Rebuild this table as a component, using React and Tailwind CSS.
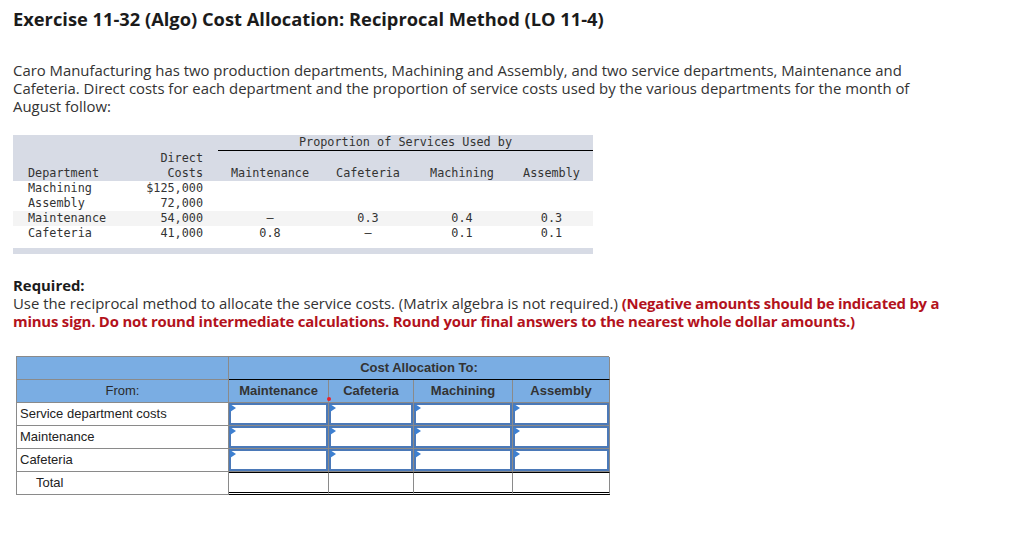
import React from "react";

const mono = { fontFamily: '"DejaVu Sans Mono", "Liberation Mono", monospace' };

function Tri() {
  return (
    <svg className="absolute left-[1px] top-[1px]" width="6" height="8" viewBox="0 0 6 8">
      <polygon points="0,0 6,4 0,8" fill="#3d7fd0" />
    </svg>
  );
}

function InputCell() {
  return (
    <div className="relative border-r border-b border-[#8a8a8a] h-[23px]">
      <div className="absolute inset-[0px] border-2 border-[#4b79b8] bg-white" />
      <Tri />
    </div>
  );
}

export default function App() {
  const topRows = [
    { d: "Machining", c: "$125,000", m: "", ca: "", ma: "", as: "", bg: "" },
    { d: "Assembly", c: "72,000", m: "", ca: "", ma: "", as: "", bg: "" },
    { d: "Maintenance", c: "54,000", m: "—", ca: "0.3", ma: "0.4", as: "0.3", bg: "bg-[#f4f4f4]" },
    { d: "Cafeteria", c: "41,000", m: "0.8", ca: "—", ma: "0.1", as: "0.1", bg: "" },
  ];
  const cols = "grid grid-cols-[127px_78px_104px_92px_96px_83px]";
  return (
    <div className="w-[1026px] h-[546px] bg-white px-[13px] pt-[7px] text-[#222]" style={{ fontFamily: '"Open Sans", Lato, sans-serif' }}>
      <div className="text-[18.3px] font-bold leading-[24px] text-[#1b1b1b]">
        Exercise 11-32 (Algo) Cost Allocation: Reciprocal Method (LO 11-4)
      </div>
      <div className="mt-[30px] text-[14.9px] leading-[18px] text-[#333]">
        Caro Manufacturing has two production departments, Machining and Assembly, and two service departments, Maintenance and
        <br />
        Cafeteria. Direct costs for each department and the proportion of service costs used by the various departments for the month of
        <br />
        August follow:
      </div>

      <div className="mt-[20px] w-[580px] text-[11.8px] leading-[15px] text-[#333]" style={mono}>
        <div className="bg-[#d7dbe5]">
          <div className={cols + " h-[15px]"}>
            <div />
            <div />
            <div className="col-span-4 text-center border-b border-black">Proportion of Services Used by</div>
          </div>
          <div className={cols + " h-[15px] mt-[1px]"}>
            <div />
            <div className="text-right pr-[15px]">Direct</div>
          </div>
          <div className={cols + " h-[15px]"}>
            <div className="pl-[15px]">Department</div>
            <div className="text-right pr-[15px]">Costs</div>
            <div className="text-center">Maintenance</div>
            <div className="text-center">Cafeteria</div>
            <div className="text-center">Machining</div>
            <div className="text-center">Assembly</div>
          </div>
        </div>
        {topRows.map((r) => (
          <div key={r.d} className={cols + " h-[15px] " + r.bg}>
            <div className="pl-[15px]">{r.d}</div>
            <div className="text-right pr-[15px]">{r.c}</div>
            <div className="text-center">{r.m}</div>
            <div className="text-center">{r.ca}</div>
            <div className="text-center">{r.ma}</div>
            <div className="text-center">{r.as}</div>
          </div>
        ))}
        <div className="h-[7px]" />
        <div className="h-[6px] bg-[#d7dbe5]" />
      </div>

      <div className="mt-[22px] text-[14.9px] leading-[18px] text-[#333]">
        <div className="font-bold text-[#1b1b1b]">Required:</div>
        <div>
          Use the reciprocal method to allocate the service costs. (Matrix algebra is not required.){" "}
          <span className="font-bold text-[#b3121c] tracking-[-0.2px]">(Negative amounts should be indicated by a</span>
          <br />
          <span className="font-bold text-[#b3121c] tracking-[-0.2px]">
            minus sign. Do not round intermediate calculations. Round your final answers to the nearest whole dollar amounts.)
          </span>
        </div>
      </div>

      <div
        className="relative mt-[26px] ml-[3px] w-[593px] grid grid-cols-[212px_100px_85px_99px_97px] border-l border-t border-[#8a8a8a] text-[13px] text-[#222]"
        style={{ fontFamily: '"Liberation Sans", Arial, sans-serif' }}
      >
        <div className="h-[23px] bg-[#7aade3] border-r border-b border-[#8a8a8a]" />
        <div className="col-span-4 h-[23px] bg-[#7aade3] border-r border-[#8a8a8a] border-b border-b-black flex items-center justify-center font-bold text-[#333]">
          Cost Allocation To:
        </div>
        <div className="h-[23px] bg-[#7aade3] border-r border-b border-[#8a8a8a] flex items-center justify-center text-[#2a2a2a]">From:</div>
        {["Maintenance", "Cafeteria", "Machining", "Assembly"].map((h) => (
          <div key={h} className="h-[23px] bg-[#7aade3] border-r border-b border-[#8a8a8a] flex items-center justify-center font-bold text-[#333]">
            {h}
          </div>
        ))}
        {["Service department costs", "Maintenance", "Cafeteria"].map((l) => (
          <React.Fragment key={l}>
            <div className="h-[23px] border-r border-b border-[#8a8a8a] flex items-center pl-[3px]">{l}</div>
            <InputCell />
            <InputCell />
            <InputCell />
            <InputCell />
          </React.Fragment>
        ))}
        <div className="h-[23px] border-r border-b border-[#8a8a8a] flex items-center pl-[19px]">Total</div>
        {[0, 1, 2, 3].map((i) => (
          <div key={i} className="h-[23px] border-r border-[#8a8a8a] border-t border-t-black border-b-[3px] border-b-black border-double" />
        ))}
        <div className="absolute left-[310px] top-[40px] w-[4px] h-[4px] rounded-full bg-[#e8202a]" />
      </div>
    </div>
  );
}
